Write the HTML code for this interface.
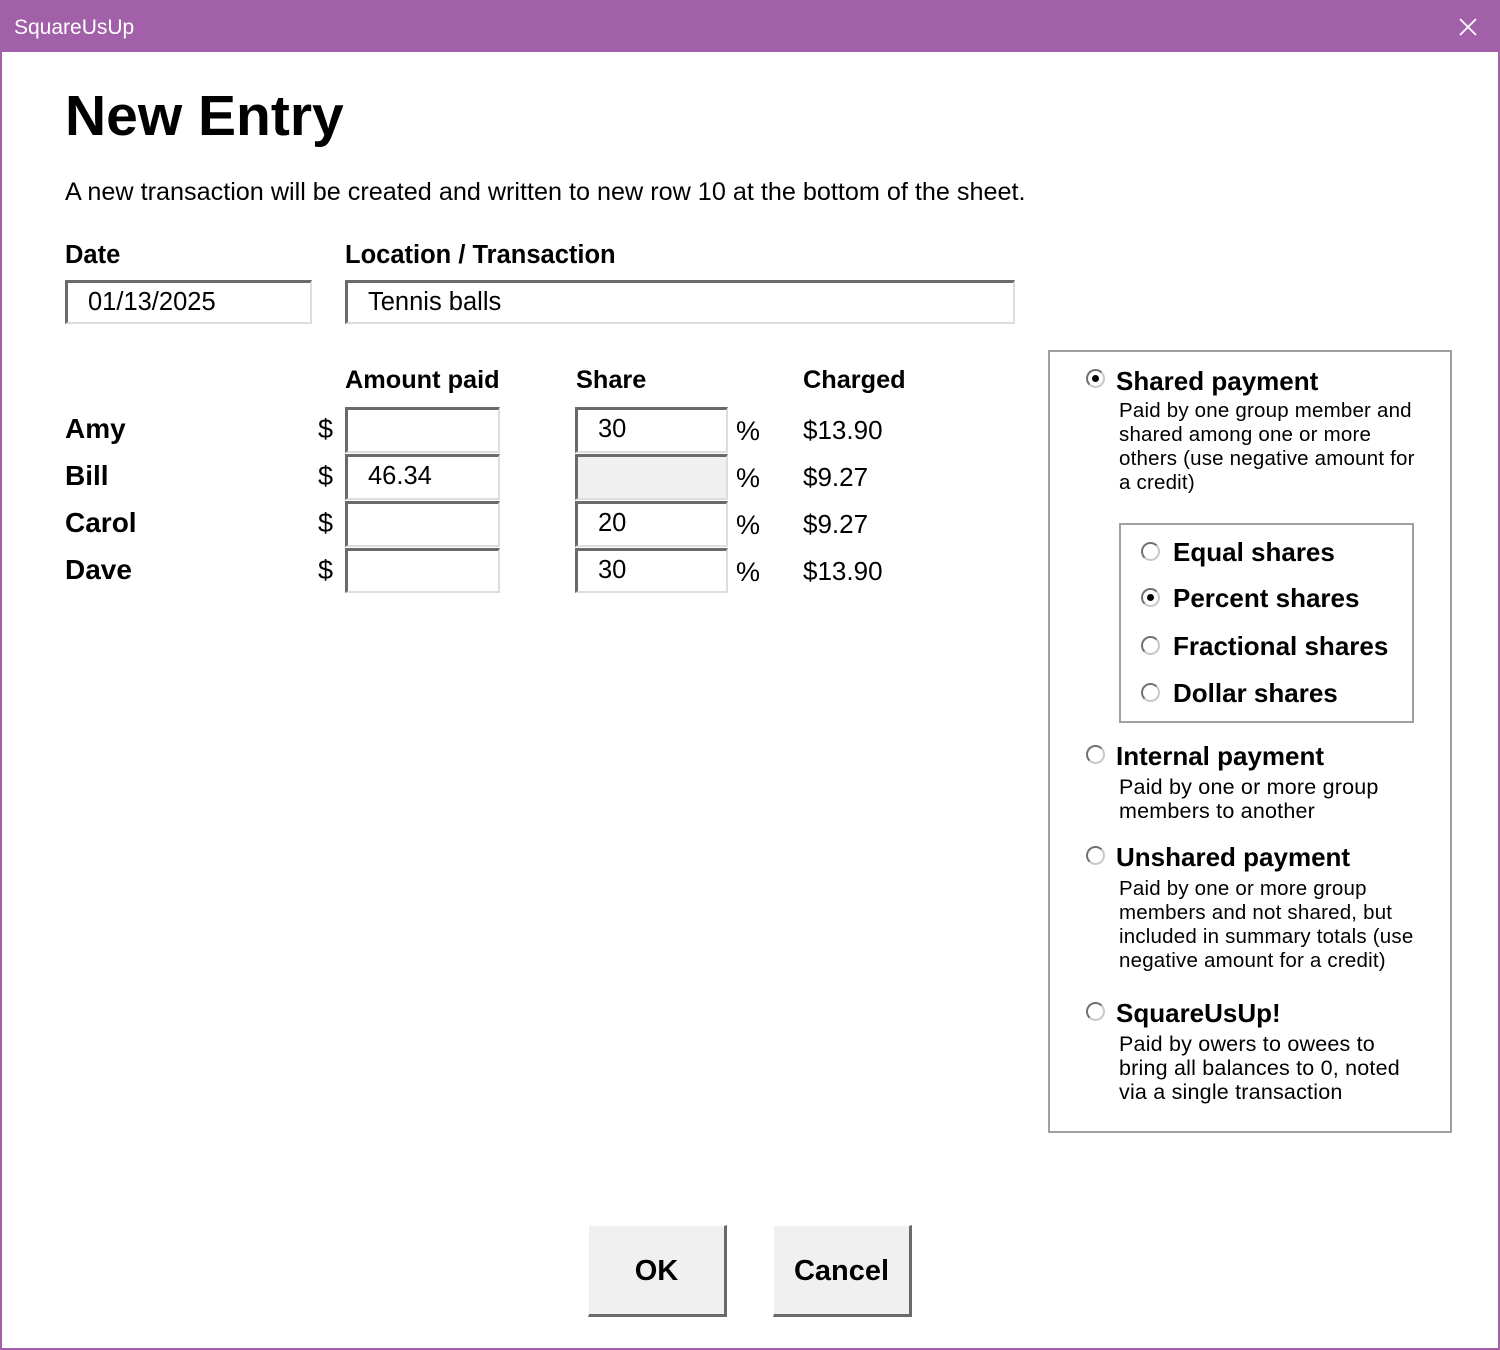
<!DOCTYPE html>
<html><head><meta charset="utf-8"><style>
*{margin:0;padding:0;box-sizing:border-box}
body{width:1500px;height:1350px;background:#a260a8;font-family:"Liberation Sans",Arial,sans-serif;color:#000;position:relative;overflow:hidden}
.win{position:absolute;left:2px;top:52px;width:1496px;height:1296px;background:#fff}
.a{position:absolute;line-height:1;white-space:nowrap}
.b{font-weight:bold}
.in{position:absolute;background:#fff;border-top:3px solid #6a6a6a;border-left:3px solid #6a6a6a;border-right:2px solid #ddd;border-bottom:2px solid #ddd;font-size:25.5px;line-height:38px;padding-left:20px}
.rd{position:absolute;width:19px;height:19px;border-radius:50%;background:#fff;border:2px solid #c8c8c8;border-top-color:#707070;border-left-color:#707070}
.rd.on::after{content:"";position:absolute;left:4px;top:4px;width:7px;height:7px;border-radius:50%;background:#000}
.d{position:absolute;font-size:20.5px;line-height:24px;left:1119px;letter-spacing:0.2px}
.btn{position:absolute;background:#f0f0f0;border-top:1px solid #fff;border-left:1px solid #fff;border-right:3px solid #6a6a6a;border-bottom:3px solid #6a6a6a;font-weight:bold;font-size:29px;text-align:center;line-height:90px}
.r{font-size:26px}
</style></head><body>
<div class="a" style="left:14px;top:17px;font-size:21px;color:#fff">SquareUsUp</div>
<svg style="position:absolute;left:1458px;top:17px" width="20" height="20"><path d="M2 2L18 18M18 2L2 18" stroke="#fff" stroke-width="1.8"/></svg>
<div class="win"></div>
<div class="a b" style="left:65px;top:88px;font-size:57px">New Entry</div>
<div class="a" style="left:65px;top:180px;font-size:25.2px">A new transaction will be created and written to new row 10 at the bottom of the sheet.</div>
<div class="a b" style="left:65px;top:243px;font-size:25.5px">Date</div>
<div class="a b" style="left:345px;top:243px;font-size:25.5px">Location / Transaction</div>
<div class="in" style="left:65px;top:280px;width:247px;height:44px">01/13/2025</div>
<div class="in" style="left:345px;top:280px;width:670px;height:44px">Tennis balls</div>
<div class="a b" style="left:345px;top:368px;font-size:25.3px">Amount paid</div>
<div class="a b" style="left:576px;top:368px;font-size:25.3px">Share</div>
<div class="a b" style="left:803px;top:368px;font-size:25.3px">Charged</div>

<div class="a b" style="left:65px;top:415px;font-size:28px">Amy</div>
<div class="a b" style="left:65px;top:462px;font-size:28px">Bill</div>
<div class="a b" style="left:65px;top:509px;font-size:28px">Carol</div>
<div class="a b" style="left:65px;top:556px;font-size:28px">Dave</div>

<div class="a" style="left:318px;top:416px;font-size:27px">$</div>
<div class="a" style="left:318px;top:463px;font-size:27px">$</div>
<div class="a" style="left:318px;top:510px;font-size:27px">$</div>
<div class="a" style="left:318px;top:557px;font-size:27px">$</div>

<div class="in" style="left:345px;top:407px;width:155px;height:46px"></div>
<div class="in" style="left:345px;top:454px;width:155px;height:46px">46.34</div>
<div class="in" style="left:345px;top:501px;width:155px;height:46px"></div>
<div class="in" style="left:345px;top:548px;width:155px;height:45px"></div>

<div class="in" style="left:575px;top:407px;width:153px;height:46px">30</div>
<div class="in" style="left:575px;top:454px;width:153px;height:46px;background:#f0f0f0"></div>
<div class="in" style="left:575px;top:501px;width:153px;height:46px">20</div>
<div class="in" style="left:575px;top:548px;width:153px;height:45px">30</div>

<div class="a" style="left:736px;top:418px;font-size:27px">%</div>
<div class="a" style="left:736px;top:465px;font-size:27px">%</div>
<div class="a" style="left:736px;top:512px;font-size:27px">%</div>
<div class="a" style="left:736px;top:559px;font-size:27px">%</div>

<div class="a" style="left:803px;top:417px;font-size:26px">$13.90</div>
<div class="a" style="left:803px;top:464px;font-size:26px">$9.27</div>
<div class="a" style="left:803px;top:511px;font-size:26px">$9.27</div>
<div class="a" style="left:803px;top:558px;font-size:26px">$13.90</div>

<div style="position:absolute;left:1048px;top:350px;width:404px;height:783px;border:2px solid #a0a0a0"></div>
<div style="position:absolute;left:1119px;top:523px;width:295px;height:200px;border:2px solid #a0a0a0"></div>

<div class="rd on" style="left:1086px;top:369px"></div>
<div class="a b r" style="left:1116px;top:368px">Shared payment</div>
<div class="d" style="top:399px">Paid by one group member and<br>shared among one or more<br>others (use negative amount for<br>a credit)</div>

<div class="rd" style="left:1141px;top:542px"></div>
<div class="a b r" style="left:1173px;top:539px">Equal shares</div>
<div class="rd on" style="left:1141px;top:588px"></div>
<div class="a b r" style="left:1173px;top:585px">Percent shares</div>
<div class="rd" style="left:1141px;top:636px"></div>
<div class="a b r" style="left:1173px;top:633px">Fractional shares</div>
<div class="rd" style="left:1141px;top:683px"></div>
<div class="a b r" style="left:1173px;top:680px">Dollar shares</div>

<div class="rd" style="left:1086px;top:745px"></div>
<div class="a b r" style="left:1116px;top:743px">Internal payment</div>
<div class="d" style="top:775px;font-size:21.5px">Paid by one or more group<br>members to another</div>

<div class="rd" style="left:1086px;top:846px"></div>
<div class="a b r" style="left:1116px;top:844px">Unshared payment</div>
<div class="d" style="top:877px">Paid by one or more group<br>members and not shared, but<br>included in summary totals (use<br>negative amount for a credit)</div>

<div class="rd" style="left:1086px;top:1002px"></div>
<div class="a b r" style="left:1116px;top:1000px">SquareUsUp!</div>
<div class="d" style="top:1032px;font-size:21.5px">Paid by owers to owees to<br>bring all balances to 0, noted<br>via a single transaction</div>

<div class="btn" style="left:588px;top:1225px;width:139px;height:92px">OK</div>
<div class="btn" style="left:773px;top:1225px;width:139px;height:92px">Cancel</div>
</body></html>
